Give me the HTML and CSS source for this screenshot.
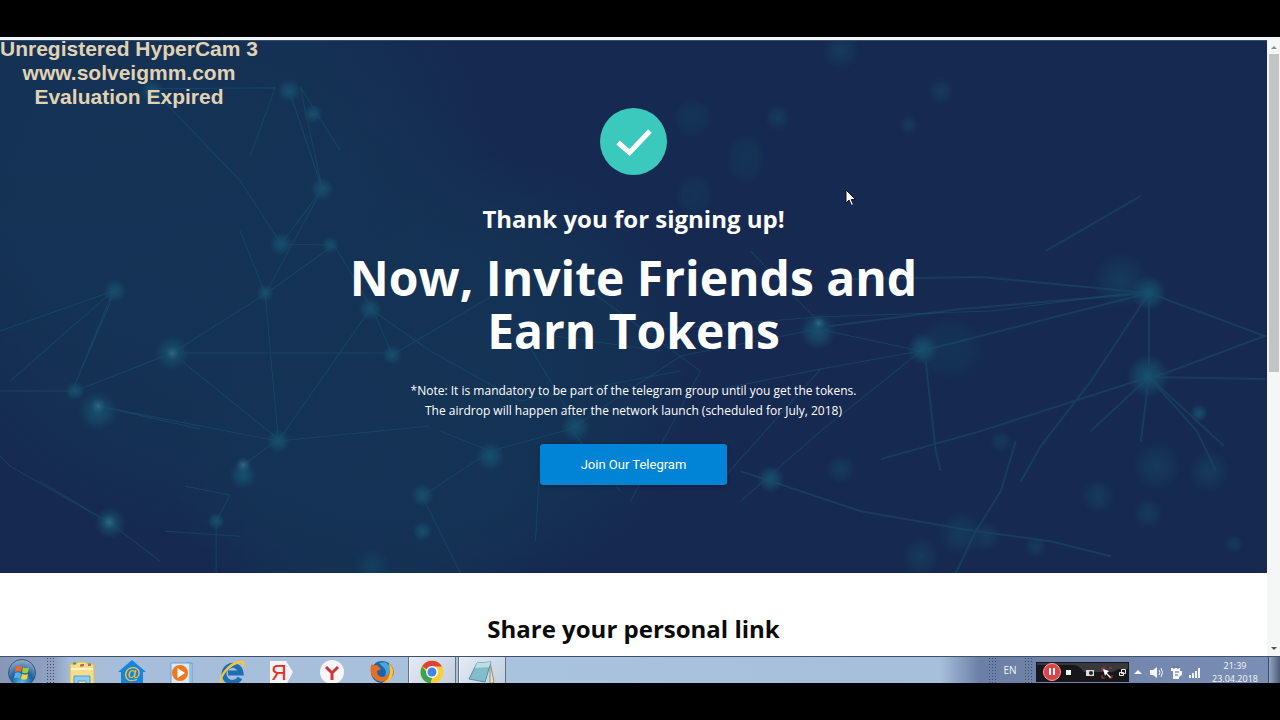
FILE: index.html
```
<!DOCTYPE html>
<html lang="en">
<head>
  <meta charset="UTF-8">
  <meta name="viewport" content="width=device-width, initial-scale=1.0">
  <title>Invite Friends and Earn Tokens</title>
  <link rel="stylesheet" href="styles.css">
</head>
<body>
  <div id="browser">
    <main id="page">
      <section class="hero">
        <!-- network background -->
        <svg class="network" viewBox="0 0 1266 532" preserveAspectRatio="xMidYMid slice" aria-hidden="true">
          <defs>
            <radialGradient id="haze">
              <stop offset="0" stop-color="#143355"/>
              <stop offset="0.6" stop-color="#143355" stop-opacity="0.8"/>
              <stop offset="1" stop-color="#143355" stop-opacity="0"/>
            </radialGradient>
            <radialGradient id="glow">
              <stop offset="0" stop-color="#18506d"/>
              <stop offset="0.5" stop-color="#164a69" stop-opacity="0.7"/>
              <stop offset="1" stop-color="#154665" stop-opacity="0"/>
            </radialGradient>
            <radialGradient id="spot">
              <stop offset="0" stop-color="#336783"/>
              <stop offset="1" stop-color="#1c5572" stop-opacity="0"/>
            </radialGradient>
          </defs>
          <g fill="url(#haze)">
            <ellipse cx="120" cy="90" rx="380" ry="240"/>
            <ellipse cx="240" cy="260" rx="330" ry="250"/>
            <ellipse cx="370" cy="430" rx="200" ry="170"/>
            <ellipse cx="500" cy="330" rx="200" ry="220"/>
            <ellipse cx="948" cy="307" rx="36" ry="32"/>
            <ellipse cx="692" cy="77" rx="20" ry="20"/>
            <ellipse cx="745" cy="118" rx="20" ry="26"/>
            <ellipse cx="694" cy="154" rx="20" ry="22"/>
          </g>
          <g stroke="#1b5672" stroke-width="1" fill="none" opacity="0.5">
            <path d="M0 350L75 350L172 312L265 253L334 204M10 340L113 250L110 262L72 350M113 250L70 355M113 250L0 290M10 425L110 482L160 520M10 425L0 415"/>
            <path d="M172 312L278 398L265 253L322 148L289 50M172 312L390 312M98 365L278 400L430 385M98 365L200 388"/>
            <path d="M152 48L275 47L250 115M289 50L322 148L300 46L340 110M322 148L281 203L330 204M152 48L240 140L281 203"/>
            <path d="M265 253L240 190M370 268L430 310L520 360M334 204L373 270L392 314L500 250M278 400L370 268"/>
            <path d="M422 455L490 410L570 388L680 315L817 288M570 388L620 450M490 410L440 390M640 290L817 276M520 360L680 330M575 382L520 290L660 310"/>
            <path d="M817 288L920 310L820 328M817 276L990 270L1145 250M820 328L710 350M820 328L720 440M920 310L820 390L740 460"/>
            <path d="M422 455L460 532M243 424L278 398M110 482L40 440M185 445L230 454L216 480L216 532M165 490L240 495"/>
            <path d="M700 330L630 460M750 210L817 280M540 410L535 500M590 250L700 330"/>
          </g>
          <g stroke="#1b5873" stroke-width="2" fill="none" opacity="0.4">
            <path d="M830 285L960 268L1148 252L980 236L850 238M1148 252L960 300L920 310M1148 252L1264 295L1165 332L1148 336L1148 252L1090 340L1040 405L1020 440"/>
            <path d="M1148 336L1264 338M1148 336L1223 405M1148 336L1196 390L1215 430M1148 336L1140 400M1148 336L980 390L880 418M1148 336L1090 390M1045 210L1140 155"/>
            <path d="M925 320L935 410L940 430M1015 400L1000 450L975 490L1050 500L1110 515M975 490L860 470L740 430M975 490L955 532"/>
          </g>
          <g fill="url(#glow)">
            <circle cx="289" cy="50" r="12"/><circle cx="152" cy="50" r="12"/><circle cx="313" cy="73" r="10"/>
            <circle cx="322" cy="148" r="12"/><circle cx="281" cy="203" r="12"/><circle cx="330" cy="204" r="9"/>
            <circle cx="265" cy="252" r="9"/><circle cx="115" cy="250" r="12"/><circle cx="172" cy="312" r="18"/>
            <circle cx="75" cy="350" r="10"/><circle cx="98" cy="370" r="20"/><circle cx="278" cy="400" r="12"/>
            <circle cx="370" cy="268" r="12"/><circle cx="392" cy="314" r="10"/><circle cx="243" cy="434" r="14"/>
            <circle cx="422" cy="454" r="12"/><circle cx="422" cy="490" r="10"/><circle cx="490" cy="415" r="15"/>
            <circle cx="575" cy="386" r="15"/><circle cx="770" cy="438" r="14"/><circle cx="817" cy="290" r="19"/>
            <circle cx="1148" cy="252" r="18"/><circle cx="1147" cy="335" r="22"/><circle cx="1198" cy="372" r="9"/>
            <circle cx="922" cy="308" r="16"/><circle cx="110" cy="482" r="16"/><circle cx="216" cy="480" r="9"/>
          </g>
          <g fill="url(#glow)" opacity="0.45">
            <circle cx="1156" cy="425" r="26"/><circle cx="1208" cy="430" r="22"/><circle cx="1097" cy="455" r="18"/>
            <circle cx="1147" cy="472" r="16"/><circle cx="960" cy="492" r="24"/><circle cx="985" cy="495" r="16"/>
            <circle cx="1000" cy="400" r="12"/><circle cx="1120" cy="240" r="30"/><circle cx="1035" cy="505" r="12"/>
            <circle cx="840" cy="428" r="16"/><circle cx="920" cy="515" r="20"/><circle cx="670" cy="430" r="12"/>
            <circle cx="777" cy="77" r="14"/><circle cx="908" cy="84" r="10"/><circle cx="840" cy="10" r="20"/>
            <circle cx="940" cy="50" r="14"/><circle cx="372" cy="525" r="18"/><circle cx="1233" cy="503" r="10"/>
          </g>
          <g fill="url(#spot)">
            <circle cx="172" cy="312" r="7"/><circle cx="98" cy="365" r="8"/><circle cx="243" cy="424" r="8"/>
            <circle cx="109" cy="481" r="8"/><circle cx="818" cy="282" r="7"/>
          </g>
        </svg>
        <div class="hero-content">
          <svg class="check" viewBox="0 0 67 67" aria-hidden="true">
            <circle cx="33.5" cy="33.5" r="33.5" fill="#3bc8bd"/>
            <path d="M18 34.500L29.500 44.500L50 23" fill="none" stroke="#fff" stroke-width="5"/>
          </svg>
          <h2>Thank you for signing up!</h2>
          <h1>Now, Invite Friends and Earn Tokens</h1>
          <p>*Note: It is mandatory to be part of the telegram group until you get the tokens.<br>
            The airdrop will happen after the network launch (scheduled for July, 2018)</p>
          <button type="button" class="join">Join Our Telegram</button>
        </div>
      </section>
      <section class="share">
        <h2>Share your personal link</h2>
      </section>
    </main>
    <div class="scrollbar">
      <span class="arrow up"></span>
      <div class="thumb"></div>
      <span class="arrow down"></span>
    </div>
    <div class="watermark">Unregistered HyperCam 3<br>www.solveigmm.com<br>Evaluation Expired</div>
    <svg class="cursor" viewBox="0 0 12 18" aria-hidden="true">
      <path d="M1 1V14L4 11L6.500 16.500L8.500 15.500L6.200 10.500H10.500Z" fill="#fff" stroke="#0b1733" stroke-width="1"/>
    </svg>
  </div>

  <footer id="taskbar">
    <div class="start">
      <svg class="icon" viewBox="0 0 28 28" aria-hidden="true">
        <defs>
          <radialGradient id="orb" cx="0.5" cy="0.85" r="0.8">
            <stop offset="0" stop-color="#4cc3ee"/>
            <stop offset="0.5" stop-color="#1f5f9e"/>
            <stop offset="1" stop-color="#8fa9c6"/>
          </radialGradient>
        </defs>
        <circle cx="14" cy="14" r="13.500" fill="url(#orb)" stroke="#34567f"/>
        <path d="M8 8Q11 6 14 8L13 13Q10 11.500 7 13Z" fill="#f2662b"/>
        <path d="M15 8.500Q18 10 21 8.500L20 13.500Q17 15 14 13.500Z" fill="#9bd13c"/>
        <path d="M7 14Q10 12.500 13 14.500L12 19.500Q9 18 6 19.500Z" fill="#4fb4ee"/>
        <path d="M14 15Q17 16.500 20 15L19 20Q16 21.500 13 20Z" fill="#ffd03c"/>
      </svg>
    </div>
    <span class="grip"></span>
    <div class="apps">
      <div class="app">
        <svg class="icon" viewBox="0 0 28 28" aria-hidden="true">
          <path d="M2 4H8L10 2H17L19 4H26V26H2Z" fill="#f4dd8d" stroke="#d9b95a"/>
          <path d="M5 3.500H8M12 5.500H15M20 4.500H23" stroke="#4b9a4c" stroke-width="2"/>
          <path d="M13 5H16M20 5H23" stroke="#d8663c" stroke-width="2"/>
          <path d="M3 9H25" stroke="#fff3c1" stroke-width="2"/>
          <path d="M6 28V16H22V28H18V21H10V28Z" fill="#8ccbee" stroke="#4e9fd0"/>
        </svg>
      </div>
      <div class="app">
        <svg class="icon" viewBox="0 0 28 28" aria-hidden="true">
          <path d="M14 0L28 12H25V28H3V12H0Z" fill="#1385e4"/>
          <text x="14" y="19" text-anchor="middle" class="at">@</text>
        </svg>
      </div>
      <div class="app">
        <svg class="icon" viewBox="0 0 28 28" aria-hidden="true">
          <path d="M18 3H24V24H18Z" fill="#c8e1f1" stroke="#5c9dc4"/>
          <path d="M3 3H22V24H3Z" fill="#d7eaf6" stroke="#64a2c8"/>
          <circle cx="12" cy="13" r="8" fill="#f0781e"/>
          <path d="M9.500 8L17 13L9.500 18Z" fill="#fff"/>
        </svg>
      </div>
      <div class="app">
        <svg class="icon" viewBox="0 0 28 28" aria-hidden="true">
          <path d="M22 18A8.500 8.500 0 1 1 23 13H10" fill="none" stroke="#1d6fb3" stroke-width="5"/>
          <path d="M4 25C-1 20 9 4 22 2Q27 1 25 7" fill="none" stroke="#f3c63d" stroke-width="2.500"/>
        </svg>
      </div>
      <div class="app">
        <svg class="icon" viewBox="0 0 28 28" aria-hidden="true">
          <path d="M2 1H18L25 12L18 25H2Z" fill="#f2f3f6"/>
          <text x="11" y="20" text-anchor="middle" class="ya">Я</text>
        </svg>
      </div>
      <div class="app">
        <svg class="icon" viewBox="0 0 28 28" aria-hidden="true">
          <circle cx="14" cy="12" r="12" fill="#f6f6f8"/>
          <path d="M8 7L14 13L20 7M14 12V20" fill="none" stroke="#cf3535" stroke-width="3"/>
        </svg>
      </div>
      <div class="app">
        <svg class="icon" viewBox="0 0 28 28" aria-hidden="true">
          <circle cx="14" cy="12" r="11" fill="#1e63a8"/>
          <path d="M11 3Q20 0 22 8Q23 15 16 17Q20 12 16 8Z" fill="#46a8dc"/>
          <path d="M3 4Q5 6 9 5L13 9L9 11Q9 17 15 17Q21 17 22 10Q23 5 20 2Q26 7 26 13A12 12 0 1 1 3 6Z" fill="#e76f1f"/>
          <path d="M21 3Q27 9 24 17Q21 23 14 23Q22 20 22 11Z" fill="#f8c63d"/>
        </svg>
      </div>
      <div class="app open">
        <svg class="icon" viewBox="0 0 28 28" aria-hidden="true">
          <circle cx="14" cy="12" r="11.500" fill="#fbcf3c"/>
          <path d="M14 12L4 6.500A11.500 11.500 0 0 1 24 6.500H14Z" fill="#dc4437"/>
          <path d="M4 6.500L14 18L12.500 23.500A11.500 11.500 0 0 1 4 6.500Z" fill="#3aa454"/>
          <circle cx="14" cy="12" r="6" fill="#fff"/>
          <circle cx="14" cy="12" r="4.500" fill="#4285e8"/>
        </svg>
      </div>
      <div class="app open">
        <svg class="icon" viewBox="0 0 28 28" aria-hidden="true">
          <path d="M22 2L26 22L22 24Z" fill="#e9e3c3" stroke="#8b8d7c"/>
          <path d="M9 3L23 2L17 22L1 19Z" fill="#83bdcd" stroke="#558fa6"/>
          <path d="M9 3L23 2L21 7L7 8Z" fill="#bfdde4"/>
        </svg>
      </div>
    </div>
    <div class="tray">
      <span class="grip"></span>
      <span class="lang">EN</span>
      <span class="grip"></span>
      <svg class="recorder" viewBox="0 0 93 20" aria-hidden="true">
        <rect width="93" height="20" fill="#17161a"/>
        <path d="M1 1H92V7H82Q78 11 74 10H48Q44 4 38 3H1Z" fill="#39383c"/>
        <circle cx="16" cy="10" r="8.500" fill="#d9444a" stroke="#f2a8a5"/>
        <path d="M14 6V13M18 6V13" stroke="#fff" stroke-width="2"/>
        <path d="M30 8H35V13H30Z" fill="#f1f1f1"/>
        <path d="M50 8H58V14H50Z" fill="#ddd"/><circle cx="55" cy="11" r="2" fill="#222"/>
        <path d="M66 9V6H69M73 6H76M66 13V16H69M73 16H76V13" fill="none" stroke="#c93636"/>
        <path d="M67 7L73 9L71 11L75 15L74 16L70 12L69 14Z" fill="#fff"/>
        <path d="M85.500 7.500H89.500V11.500H85.500ZM83.500 10.500H87.500V13.500H83.500Z" fill="#17161a" stroke="#eee"/>
      </svg>
      <svg class="tray-icons" viewBox="0 0 72 20" aria-hidden="true">
        <path d="M4 12L8 8L12 12Z" fill="#f3f6fb"/>
        <path d="M20 8H23L27 5V16L23 13H20Z" fill="#f3f6fb"/>
        <path d="M29 8Q31 10.500 29 13M31 6Q34 10.500 31 15" fill="none" stroke="#f3f6fb"/>
        <path d="M41 6H50V9H52V13L49 15V17H43V9H41Z" fill="#f3f6fb"/>
        <path d="M44 4V7M48 4V7M45 10H49M45 13H48" stroke="#52678e"/>
        <path d="M59 13H61V16H59ZM62 11H64V16H62ZM65 9H67V16H65ZM68 6H70V16H68Z" fill="#f3f6fb"/>
      </svg>
      <div class="clock"><span>21:39</span><span>23.04.2018</span></div>
      <span class="show-desktop"></span>
    </div>
  </footer>
</body>
</html>
```
FILE: styles.css
```
* {
  box-sizing: border-box;
}

body {
  font-family: 'Open Sans', sans-serif;
  margin: 0;
  padding: 37px 0; /* black bars above and below the screen */
  display: flex;
  flex-direction: column;
  height: 100vh;
  background-color: #000;
}

h1, h2, p {
  margin: 0;
}

#browser {
  position: relative;
  flex: 1;
  min-height: 0;
  display: flex;
  border-top: 3px solid #f4f5f7;
  background-color: #fff;
}

#page {
  flex: 1;
  overflow: hidden;
  text-align: center;
}

.hero {
  position: relative;
  padding: 67px 20px 88px;
  background-color: #162950;
  color: #fff;
  border-top: 1px solid #34506f;
}

.network {
  position: absolute;
  top: 0;
  left: 0;
  width: 100%;
  height: 100%;
}

.hero-content {
  position: relative;
  display: flex;
  flex-direction: column;
  align-items: center;
}

.check {
  width: 67px;
  height: 67px;
  margin-bottom: 28px;
}

.hero h2,
.share h2 {
  font-size: 24px;
  line-height: 32px;
  font-weight: 700;
}

.hero h1 {
  max-width: 640px;
  margin-top: 16px;
  font-size: 48px;
  line-height: 53px;
  font-weight: 700;
}

.hero p {
  margin-top: 24px;
  font-size: 12px;
  line-height: 20px;
}

.join {
  margin-top: 23px;
  padding: 0 41px;
  height: 41px;
  border: none;
  border-radius: 3px;
  background-color: #0284d6;
  color: #fff;
  font-family: Roboto, sans-serif;
  font-size: 13px;
  box-shadow: 0 1px 4px rgba(0, 0, 0, 0.3);
  cursor: pointer;
}

.share {
  padding: 40px 20px;
  color: #0a0a0a;
}

/* scrollbar */
.scrollbar {
  width: 13px;
  display: flex;
  flex-direction: column;
  align-items: center;
  padding: 6px 0;
  background-color: #f5f6f6;
}

.thumb {
  width: 10px;
  height: 318px;
  margin-top: 5px;
  margin-bottom: auto;
  background-color: #c3c4c4;
}

.arrow {
  border-left: 3px solid transparent;
  border-right: 3px solid transparent;
}

.up {
  border-bottom: 3px solid #8c8c8c;
}

.down {
  border-top: 3px solid #505050;
}

/* things drawn over the page */
.watermark {
  position: absolute;
  top: -3px;
  left: 0;
  color: #e2d2b4;
  font-family: 'Liberation Sans', Arial, sans-serif;
  font-size: 21px;
  font-weight: 700;
  line-height: 24px;
  text-align: center;
}

.cursor {
  position: absolute;
  top: 149px;
  left: 845px;
  width: 12px;
  height: 18px;
}

/* taskbar */
#taskbar {
  height: 27px;
  display: flex;
  overflow: hidden;
  border-top: 1px solid #3f5168;
  background: linear-gradient(90deg, #8797b8 0, #8fa0c0 54px, #a6bcd9 70px, #a9c2dd 500px, #a8bfdb 940px, #6c7fa5 980px, #7b8fb6 100%);
}

.start {
  width: 44px;
  padding: 2px 0 0 8px;
}

.icon {
  display: block;
  flex: none;
  width: 28px;
  height: 28px;
}

.grip {
  width: 8px;
  height: 100%;
  background-image: radial-gradient(circle, #3d4d6d 1px, transparent 1px);
  background-size: 3px 3px;
}

.start + .grip {
  margin-left: 2px;
}

.apps {
  flex: 1;
  display: flex;
  gap: 2px;
  padding-left: 4px;
}

.app {
  width: 48px;
  padding-top: 3px;
  display: flex;
  justify-content: center;
}

.app.open {
  border: 1px solid #5e7288;
  border-width: 0 1px;
  background: linear-gradient(135deg, #e4ebf3, #c2cfdf);
  box-shadow: inset 1px 0 0 #edf3f9;
}

.at,
.ya {
  font-family: 'Liberation Sans', Arial, sans-serif;
}

.at {
  font-size: 17px;
  font-weight: 700;
  fill: #f5bd25;
}

.ya {
  font-size: 22px;
  fill: #e52d20;
}

.tray {
  display: flex;
  color: #f3f6fb;
  font-family: 'Open Sans', sans-serif;
}

.lang {
  width: 28px;
  padding-top: 5px;
  font-size: 10px;
  line-height: 16px;
  text-align: center;
}

.recorder {
  width: 93px;
  height: 20px;
  margin: 5px 0 0 4px;
}

.tray-icons {
  width: 72px;
  height: 20px;
  margin: 5px 0 0 1px;
}

.clock {
  width: 66px;
  display: flex;
  flex-direction: column;
  align-items: center;
  padding-top: 2px;
  font-size: 9px;
  line-height: 13px;
}

.show-desktop {
  width: 12px;
  border-left: 1px solid #3d4d68;
  background: linear-gradient(90deg, #93a5c2, #4c5c78);
}
```
